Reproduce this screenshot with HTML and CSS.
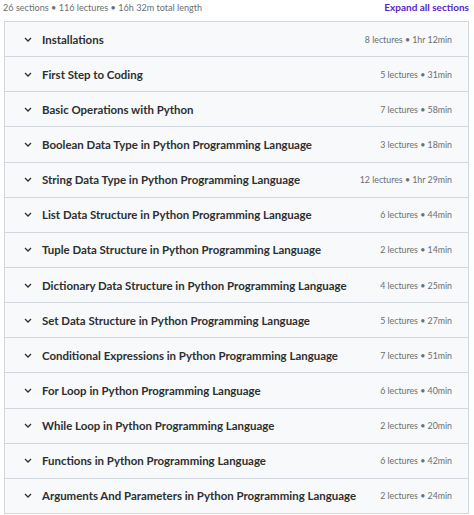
FILE: index.html
```html
<!DOCTYPE html>
<html>
<head>
<meta charset="utf-8">
<link rel="stylesheet" href="styles.css">
</head>
<body>
<div class="page">
  <div class="summary">
    <span class="stats">26 sections • 116 lectures • 16h 32m total length</span>
    <a class="expand">Expand all sections</a>
  </div>
  <div class="sections">
    <div class="row"><span class="chev"><svg viewBox="0 0 8 5" width="8" height="5"><path d="M1 1l3 3 3-3" fill="none" stroke="#2d2f31" stroke-width="1.3"/></svg></span><span class="title">Installations</span><span class="meta">8 lectures • 1hr 12min</span></div>
    <div class="row"><span class="chev"><svg viewBox="0 0 8 5" width="8" height="5"><path d="M1 1l3 3 3-3" fill="none" stroke="#2d2f31" stroke-width="1.3"/></svg></span><span class="title">First Step to Coding</span><span class="meta">5 lectures • 31min</span></div>
    <div class="row"><span class="chev"><svg viewBox="0 0 8 5" width="8" height="5"><path d="M1 1l3 3 3-3" fill="none" stroke="#2d2f31" stroke-width="1.3"/></svg></span><span class="title">Basic Operations with Python</span><span class="meta">7 lectures • 58min</span></div>
    <div class="row"><span class="chev"><svg viewBox="0 0 8 5" width="8" height="5"><path d="M1 1l3 3 3-3" fill="none" stroke="#2d2f31" stroke-width="1.3"/></svg></span><span class="title">Boolean Data Type in Python Programming Language</span><span class="meta">3 lectures • 18min</span></div>
    <div class="row"><span class="chev"><svg viewBox="0 0 8 5" width="8" height="5"><path d="M1 1l3 3 3-3" fill="none" stroke="#2d2f31" stroke-width="1.3"/></svg></span><span class="title">String Data Type in Python Programming Language</span><span class="meta">12 lectures • 1hr 29min</span></div>
    <div class="row"><span class="chev"><svg viewBox="0 0 8 5" width="8" height="5"><path d="M1 1l3 3 3-3" fill="none" stroke="#2d2f31" stroke-width="1.3"/></svg></span><span class="title">List Data Structure in Python Programming Language</span><span class="meta">6 lectures • 44min</span></div>
    <div class="row"><span class="chev"><svg viewBox="0 0 8 5" width="8" height="5"><path d="M1 1l3 3 3-3" fill="none" stroke="#2d2f31" stroke-width="1.3"/></svg></span><span class="title">Tuple Data Structure in Python Programming Language</span><span class="meta">2 lectures • 14min</span></div>
    <div class="row"><span class="chev"><svg viewBox="0 0 8 5" width="8" height="5"><path d="M1 1l3 3 3-3" fill="none" stroke="#2d2f31" stroke-width="1.3"/></svg></span><span class="title">Dictionary Data Structure in Python Programming Language</span><span class="meta">4 lectures • 25min</span></div>
    <div class="row"><span class="chev"><svg viewBox="0 0 8 5" width="8" height="5"><path d="M1 1l3 3 3-3" fill="none" stroke="#2d2f31" stroke-width="1.3"/></svg></span><span class="title">Set Data Structure in Python Programming Language</span><span class="meta">5 lectures • 27min</span></div>
    <div class="row"><span class="chev"><svg viewBox="0 0 8 5" width="8" height="5"><path d="M1 1l3 3 3-3" fill="none" stroke="#2d2f31" stroke-width="1.3"/></svg></span><span class="title">Conditional Expressions in Python Programming Language</span><span class="meta">7 lectures • 51min</span></div>
    <div class="row"><span class="chev"><svg viewBox="0 0 8 5" width="8" height="5"><path d="M1 1l3 3 3-3" fill="none" stroke="#2d2f31" stroke-width="1.3"/></svg></span><span class="title">For Loop in Python Programming Language</span><span class="meta">6 lectures • 40min</span></div>
    <div class="row"><span class="chev"><svg viewBox="0 0 8 5" width="8" height="5"><path d="M1 1l3 3 3-3" fill="none" stroke="#2d2f31" stroke-width="1.3"/></svg></span><span class="title">While Loop in Python Programming Language</span><span class="meta">2 lectures • 20min</span></div>
    <div class="row"><span class="chev"><svg viewBox="0 0 8 5" width="8" height="5"><path d="M1 1l3 3 3-3" fill="none" stroke="#2d2f31" stroke-width="1.3"/></svg></span><span class="title">Functions in Python Programming Language</span><span class="meta">6 lectures • 42min</span></div>
    <div class="row"><span class="chev"><svg viewBox="0 0 8 5" width="8" height="5"><path d="M1 1l3 3 3-3" fill="none" stroke="#2d2f31" stroke-width="1.3"/></svg></span><span class="title">Arguments And Parameters in Python Programming Language</span><span class="meta">2 lectures • 24min</span></div>
  </div>
</div>
</body>
</html>
```
FILE: styles.css
```css
* { box-sizing: border-box; }
html, body { margin: 0; padding: 0; background: #fff; }
body { font-family: Lato, "Liberation Sans", sans-serif; color: #2d2f31; }
.page { padding: 0 5px 0 4px; overflow: hidden; height: 515px; }
.summary {
  display: flex;
  justify-content: space-between;
  align-items: flex-start;
  height: 21px;
  padding-top: 2px;
}
.stats { font-size: 9.1px; color: #6a6f73; margin-left: -1px; }
.expand { font-size: 10px; font-weight: 700; color: #5624d0; margin-top: -1px; }
.sections { border: 1px solid #d1d7dc; border-bottom: none; }
.row {
  display: flex;
  align-items: center;
  height: 35.15px;
  background: #f7f9fa;
  border-bottom: 1px solid #d1d7dc;
  padding: 0 16px 0 19px;
}
.chev { width: 18px; display: flex; align-items: center; }
.chev svg { display: block; }
.title { flex: 1; font-size: 11.45px; font-weight: 700; color: #2d2f31; white-space: nowrap; }
.meta { font-size: 8.8px; color: #6a6f73; white-space: nowrap; }
```
